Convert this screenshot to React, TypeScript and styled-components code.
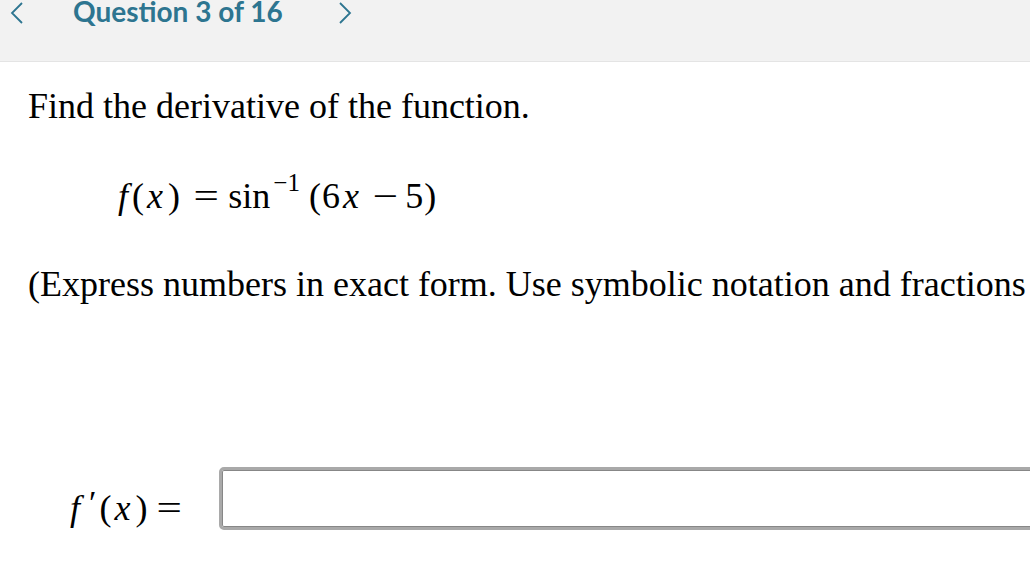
import styled, { createGlobalStyle } from "styled-components";

const Global = createGlobalStyle`
    html, body {
        margin: 0;
        padding: 0;
        background: #ffffff;
        overflow: hidden;
    }
`;

const Page = styled.div`
    width: 1030px;
    height: 578px;
    overflow: hidden;
`;

const Header = styled.div`
    display: flex;
    align-items: flex-start;
    height: 62px;
    background-color: #f2f2f2;
    border-bottom: 1px solid #e4e4e4;
    box-sizing: border-box;
`;

const NavBtn = styled.button`
    display: flex;
    align-items: center;
    justify-content: center;
    width: 34px;
    height: 26px;
    padding: 0;
    margin: 0;
    border: none;
    background: none;
    color: #2d7590;
`;

const Title = styled.div`
    margin: -4px 45px 0 39px;
    font-family: "Source Sans Pro", Lato, "Open Sans", sans-serif;
    font-weight: 700;
    font-size: 28px;
    line-height: 30px;
    color: #2d7590;
`;

const Body = styled.div`
    padding: 1px 0 0 28px;
    font-family: "Liberation Serif", "Times New Roman", serif;
    color: #000;
`;

const Prompt = styled.p`
    margin: 23px 0 0 0;
    font-size: 36px;
    line-height: 40px;
    white-space: nowrap;
`;

const Formula = styled.div`
    margin: 50px 0 0 90px;
    font-size: 36px;
    line-height: 40px;
    white-space: nowrap;
`;

/* one math symbol, with the spacing MathJax gives it */
const Sym = styled.span<{ $italic?: boolean; $l?: number; $r?: number; $wide?: boolean }>`
    display: inline-block;
    font-style: ${(p) => (p.$italic ? "italic" : "normal")};
    margin-left: ${(p) => p.$l ?? 0}px;
    margin-right: ${(p) => p.$r ?? 0}px;
    transform: ${(p) => (p.$wide ? "scaleX(1.25)" : "none")};
`;

const Sup = styled.sup`
    font-size: 25px;
    vertical-align: 17px;
    line-height: 0;
    margin: 0 9px 0 3px;
`;

const Prime = styled.span`
    display: inline-block;
    font-size: 34px;
    vertical-align: 6px;
    margin: 0 3px 0 9px;
`;

const Note = styled.p`
    margin: 48px 0 0 0;
    font-size: 36px;
    line-height: 40px;
    white-space: nowrap;
`;

const AnswerRow = styled.div`
    display: flex;
    align-items: flex-start;
    gap: 39px;
    margin: 163px 0 0 42px;
`;

const Label = styled.div`
    margin-top: 16px;
    font-size: 36px;
    line-height: 40px;
    white-space: nowrap;
`;

const Input = styled.input`
    flex: 1;
    height: 63px;
    box-sizing: border-box;
    border: 3px solid #a9a9a9;
    box-shadow: inset 0 0 0 1px #878787;
    border-radius: 5px;
    margin-right: -40px;
    background: #fff;
    outline: none;
`;

function Chevron({ dir }: { dir: "left" | "right" }) {
    return (
        <svg width="16" height="24" viewBox="0 0 16 24" fill="none">
            <path
                d={dir === "left" ? "M13 2 L3 12 L13 22" : "M3 2 L13 12 L3 22"}
                stroke="currentColor"
                strokeWidth="1.8"
            />
        </svg>
    );
}

export default function App() {
    return (
        <Page>
            <Global />
            <Header>
                <NavBtn>
                    <Chevron dir="left" />
                </NavBtn>
                <Title>Question 3 of 16</Title>
                <NavBtn>
                    <Chevron dir="right" />
                </NavBtn>
            </Header>
            <Body>
                <Prompt>Find the derivative of the function.</Prompt>
                <Formula>
                    <Sym $italic $r={4}>f</Sym>
                    <Sym>(</Sym>
                    <Sym $italic $l={3} $r={5}>x</Sym>
                    <Sym>)</Sym>
                    <Sym $wide $l={16} $r={12}>=</Sym>
                    <Sym>sin</Sym>
                    <Sup>−1</Sup>
                    <Sym>(</Sym>
                    <Sym $l={1}>6</Sym>
                    <Sym $italic $l={3} $r={3}>x</Sym>
                    <Sym $wide $l={13} $r={10}>−</Sym>
                    <Sym>5</Sym>
                    <Sym $l={1}>)</Sym>
                </Formula>
                <Note>
                    (Express numbers in exact form. Use symbolic notation and fractions where needed.)
                </Note>
                <AnswerRow>
                    <Label>
                        <Sym $italic>f</Sym>
                        <Prime>′</Prime>
                        <Sym>(</Sym>
                        <Sym $italic $l={3} $r={5}>x</Sym>
                        <Sym>)</Sym>
                        <Sym $wide $l={12}>=</Sym>
                    </Label>
                    <Input />
                </AnswerRow>
            </Body>
        </Page>
    );
}
